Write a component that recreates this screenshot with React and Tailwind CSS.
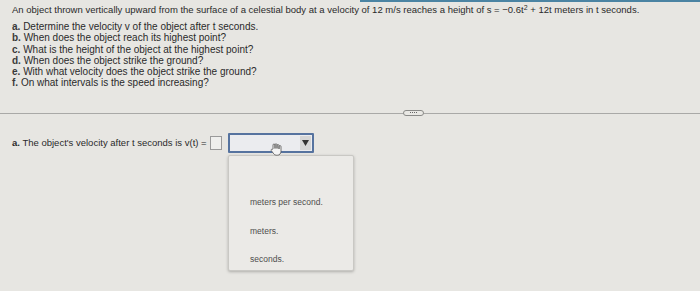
import React from 'react';

const lines = [
  ['a.', 'Determine the velocity v of the object after t seconds.'],
  ['b.', 'When does the object reach its highest point?'],
  ['c.', 'What is the height of the object at the highest point?'],
  ['d.', 'When does the object strike the ground?'],
  ['e.', 'With what velocity does the object strike the ground?'],
  ['f.', 'On what intervals is the speed increasing?'],
];

function HandCursor() {
  return (
    <svg width="12" height="13" viewBox="0 0 12 13" className="absolute left-[40px] top-[8px]">
      <path
        d="M3 6V2a1 1 0 0 1 2 0v3.5V1.8a1 1 0 0 1 2 0v3.7V2.6a1 1 0 0 1 2 0v3.4V3.6a1 1 0 0 1 2 0v4.6c0 2.3-1.4 4-3.6 4H6.2c-1.1 0-1.8-.5-2.4-1.3L1.2 7.5a1 1 0 0 1 1.5-1.2Z"
        fill="#f4f4f4"
        stroke="#555"
        strokeWidth="0.8"
      />
    </svg>
  );
}

export default function App() {
  return (
    <div
      className="w-[700px] h-[291px] overflow-hidden bg-[#e7e6e2] text-[#2a2a2a] relative"
      style={{ fontFamily: '"Liberation Sans", Arial, sans-serif' }}
    >
      <div className="h-[2px] ml-[360px] bg-[#4b84a3]" />
      <div className="pl-[12px] pt-[2px] text-[9.5px] leading-[11px]">
        <div>
          An object thrown vertically upward from the surface of a celestial body at a velocity of 12 m/s reaches a height of s = −0.6t
          <sup className="text-[7px]">2</sup> + 12t meters in t seconds.
        </div>
        <div className="mt-[6px] flex flex-col text-[10px]">
          {lines.map(([k, t]) => (
            <div key={k} className="leading-[11.3px]">
              <span className="font-bold text-[#3a3a3a]">{k}</span> {t}
            </div>
          ))}
        </div>
      </div>

      <div className="mt-[24px] relative">
        <div className="h-px bg-[#a9a9a7]" />
        <div className="absolute left-[403px] top-[-3px] w-[21px] h-[6px] rounded-full border border-[#8a8a88] bg-[#e9e8e4] flex items-center justify-center gap-[1px]">
          <span className="w-[1px] h-[1px] bg-[#666]" />
          <span className="w-[1px] h-[1px] bg-[#666]" />
          <span className="w-[1px] h-[1px] bg-[#666]" />
          <span className="w-[1px] h-[1px] bg-[#666]" />
        </div>
      </div>

      <div className="mt-[19px] pl-[12px] flex items-center text-[9.5px]">
        <span>
          <span className="font-bold">a.</span> The object's velocity after t seconds is v(t) =
        </span>
        <div className="ml-[3px] w-[12px] h-[14px] border border-[#9a9a9a] bg-[#efefed]" />
        <div className="ml-[6px] relative w-[86px] h-[20px] border-2 border-[#56739f] bg-[#ebecef] rounded-[1px] flex justify-end items-center pr-[1px]">
          <HandCursor />
          <div className="w-[11px] h-[14px] bg-[#d6d6d6] flex items-center justify-center">
            <svg width="7" height="6" viewBox="0 0 7 6">
              <path d="M0 0h7L3.5 6Z" fill="#333" />
            </svg>
          </div>
        </div>
      </div>

      <div className="ml-[228px] mt-[2px] w-[126px] h-[116px] bg-[#ebeae7] border border-[#c9c8c4] rounded-[2px] shadow-[0_1px_3px_rgba(0,0,0,0.25)] pl-[21px] pt-[40px] text-[8.5px] text-[#4e4e4e] flex flex-col gap-[16px]">
        <div>meters per second.</div>
        <div>meters.</div>
        <div>seconds.</div>
      </div>
    </div>
  );
}
